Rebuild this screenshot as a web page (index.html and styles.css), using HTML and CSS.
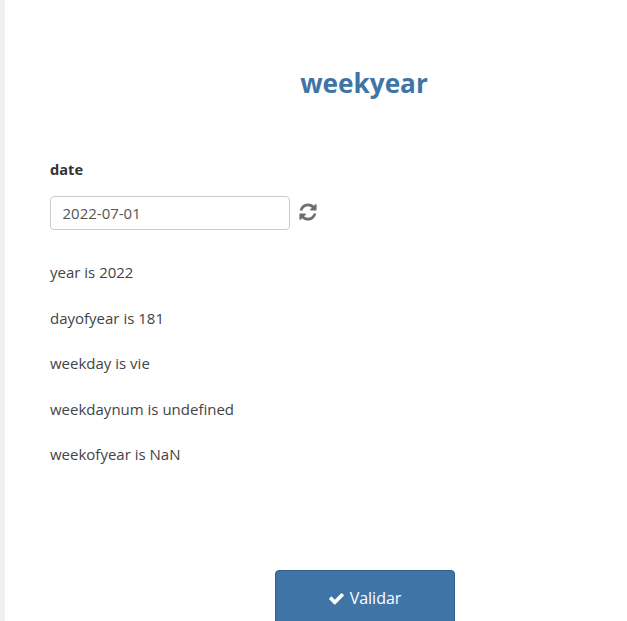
FILE: index.html
```html
<!DOCTYPE html>
<html lang="es">
<head>
<meta charset="utf-8">
<title>weekyear</title>
<link rel="stylesheet" href="styles.css">
</head>
<body>
<main class="page">
  <h1 class="title">weekyear</h1>
  <form class="form">
    <label class="label" for="date">date</label>
    <div class="field">
      <input class="input" id="date" type="text" value="2022-07-01">
      <svg class="refresh" viewBox="0 0 1792 1792" aria-hidden="true"><path d="M1639 1056q0 5-1 7-64 268-268 434.5t-478 166.5q-146 0-282.5-55t-243.5-157l-129 129q-19 19-45 19t-45-19-19-45v-448q0-26 19-45t45-19h448q26 0 45 19t19 45-19 45l-137 137q71 66 161 102t187 36q134 0 250-65t186-179q11-17 53-117 8-23 30-23h192q13 0 22.5 9.5t9.5 22.5zm25-800v448q0 26-19 45t-45 19h-448q-26 0-45-19t-19-45 19-45l138-138q-148-137-349-137-134 0-250 65t-186 179q-11 17-53 117-8 23-30 23h-199q-13 0-22.5-9.5t-9.5-22.5v-7q65-268 270-434.5t480-166.5q146 0 284 55.5t245 156.5l130-129q19-19 45-19t45 19 19 45z"/></svg>
    </div>
    <div class="results">
      <p>year is 2022</p>
      <p>dayofyear is 181</p>
      <p>weekday is vie</p>
      <p>weekdaynum is undefined</p>
      <p>weekofyear is NaN</p>
    </div>
    <div class="actions">
      <button class="submit" type="button">
        <svg class="check" viewBox="0 0 1792 1792" aria-hidden="true"><path d="M1671 566q0 40-28 68l-724 724-136 136q-28 28-68 28t-68-28l-136-136-362-362q-28-28-28-68t28-68l136-136q28-28 68-28t68 28l294 295 656-657q28-28 68-28t68 28l136 136q28 28 28 68z"/></svg>
        <span>Validar</span>
      </button>
    </div>
  </form>
</main>
</body>
</html>
```
FILE: styles.css
```css
* { box-sizing: border-box; }
html, body { height: 100%; }
body {
  margin: 0;
  overflow: hidden;
  background: #fff;
  color: #444;
  font-family: "Open Sans", sans-serif;
  font-size: 15px;
  line-height: 20px;
}
.page {
  height: 621px;
  padding-left: 45px;
  border-left: 5px solid #f0f0f0;
  overflow: hidden;
}
.title {
  margin: 65px 0 0;
  padding-left: 51px;
  text-align: center;
  color: #3f74a7;
  font-size: 26.2px;
  line-height: 36px;
  font-weight: 700;
}
.label {
  display: block;
  margin-top: 58px;
  color: #333;
  font-weight: 700;
  font-size: 14.6px;
}
.field {
  display: flex;
  align-items: center;
  gap: 8px;
  margin-top: 17px;
}
.input {
  width: 240px;
  height: 34px;
  padding: 6px 11.5px;
  border: 1px solid #ccc;
  border-radius: 4px;
  color: #555;
  background: #fff;
  font: 15px/20px "Open Sans", sans-serif;
}
.refresh {
  width: 20px;
  height: 20px;
  margin-top: -2px;
  fill: #6e6e6e;
}
.results { margin-top: 32.2px; }
.results p { margin: 0 0 25.5px; }
.actions {
  margin-top: 106px;
  padding-left: 225px;
}
.submit {
  display: flex;
  align-items: center;
  justify-content: center;
  gap: 5px;
  width: 180px;
  height: 60px;
  padding: 0 1px 4px 0;
  border: 1px solid #2e5f8f;
  border-radius: 4px;
  background: #3f74a7;
  color: #fff;
  font: 16px/22px "Open Sans", sans-serif;
}
.check { width: 17px; height: 17px; fill: #fff; }
```
